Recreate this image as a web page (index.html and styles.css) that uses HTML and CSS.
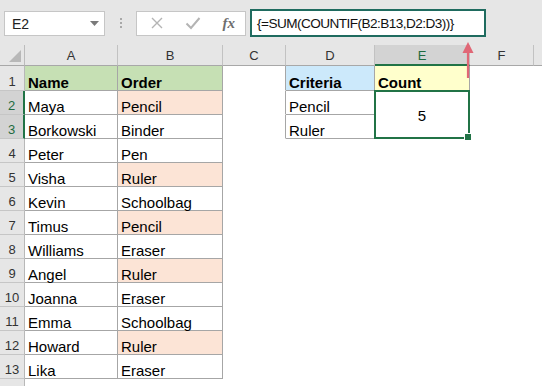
FILE: index.html
```html
<!DOCTYPE html>
<html>
<head>
<meta charset="utf-8">
<link rel="stylesheet" href="styles.css">
</head>
<body>
<div class="app">
  <div class="toolbar">
    <div class="namebox"><span>E2</span><svg class="dd" width="9" height="5" viewBox="0 0 9 5"><path d="M0 0h9L4.5 5z" fill="#7a7a7a"/></svg></div>
    <div class="grip"><i></i><i></i><i></i></div>
    <div class="fxbox">
      <svg width="14" height="14" viewBox="0 0 14 14"><path d="M2 2L12 12M12 2L2 12" stroke="#b4b4b4" stroke-width="1.4" fill="none"/></svg>
      <svg width="16" height="14" viewBox="0 0 16 14"><path d="M1.5 7.5L6 12L14.5 2" stroke="#b4b4b4" stroke-width="2" fill="none"/></svg>
      <span class="fx">fx</span>
    </div>
    <div class="formula">{=SUM(COUNTIF(B2:B13,D2:D3))}</div>
  </div>
  <div class="sheet">
    <div class="corner"><svg width="12" height="12" viewBox="0 0 12 12"><path d="M12 0V12H0z" fill="#b8b8b8"/></svg></div>
    <div class="ch">A</div><div class="ch">B</div><div class="ch">C</div><div class="ch">D</div><div class="ch sel">E</div><div class="ch">F</div><div class="ch last"></div>

    <div class="rh">1</div><div class="c t g b">Name</div><div class="c t g b">Order</div><div class="c rb"></div><div class="c t bl b">Criteria</div><div class="c t y b">Count</div><div class="c"></div><div class="c"></div>
    <div class="rh sel">2</div><div class="c t">Maya</div><div class="c t p">Pencil</div><div class="c rb"></div><div class="c t">Pencil</div><div class="c t merged">5</div><div class="c"></div><div class="c"></div>
    <div class="rh sel">3</div><div class="c t">Borkowski</div><div class="c t">Binder</div><div class="c rb"></div><div class="c t">Ruler</div><div class="c"></div><div class="c"></div>
    <div class="rh">4</div><div class="c t">Peter</div><div class="c t">Pen</div><div class="c"></div><div class="c"></div><div class="c"></div><div class="c"></div><div class="c"></div>
    <div class="rh">5</div><div class="c t">Visha</div><div class="c t p">Ruler</div><div class="c"></div><div class="c"></div><div class="c"></div><div class="c"></div><div class="c"></div>
    <div class="rh">6</div><div class="c t">Kevin</div><div class="c t">Schoolbag</div><div class="c"></div><div class="c"></div><div class="c"></div><div class="c"></div><div class="c"></div>
    <div class="rh">7</div><div class="c t">Timus</div><div class="c t p">Pencil</div><div class="c"></div><div class="c"></div><div class="c"></div><div class="c"></div><div class="c"></div>
    <div class="rh">8</div><div class="c t">Williams</div><div class="c t">Eraser</div><div class="c"></div><div class="c"></div><div class="c"></div><div class="c"></div><div class="c"></div>
    <div class="rh">9</div><div class="c t">Angel</div><div class="c t p">Ruler</div><div class="c"></div><div class="c"></div><div class="c"></div><div class="c"></div><div class="c"></div>
    <div class="rh">10</div><div class="c t">Joanna</div><div class="c t">Eraser</div><div class="c"></div><div class="c"></div><div class="c"></div><div class="c"></div><div class="c"></div>
    <div class="rh">11</div><div class="c t">Emma</div><div class="c t">Schoolbag</div><div class="c"></div><div class="c"></div><div class="c"></div><div class="c"></div><div class="c"></div>
    <div class="rh">12</div><div class="c t">Howard</div><div class="c t p">Ruler</div><div class="c"></div><div class="c"></div><div class="c"></div><div class="c"></div><div class="c"></div>
    <div class="rh">13</div><div class="c t">Lika</div><div class="c t">Eraser</div><div class="c"></div><div class="c"></div><div class="c"></div><div class="c"></div><div class="c"></div>
    <div class="rh"></div>
  </div>
  <svg class="arrow" width="14" height="36" viewBox="0 0 14 36"><path d="M7 10V36" stroke="#e06776" stroke-width="2.2"/><path d="M1.5 11L7 0L12.5 11z" fill="#e06776"/></svg>
</div>
</body>
</html>
```
FILE: styles.css
```css
* { box-sizing: border-box; }
html, body { margin: 0; padding: 0; background: #fff; }
body { font-family: "Liberation Sans", Arial, sans-serif; }
.app { position: relative; width: 542px; height: 386px; overflow: hidden; }
.toolbar {
  height: 45px; background: #e6e6e6; display: flex; align-items: center;
  padding: 1px 0 0 4px; gap: 0;
}
.namebox {
  width: 101px; height: 25px; background: #fff; border: 1px solid #c6c6c6;
  display: flex; align-items: center; justify-content: space-between;
  padding: 1px 5px 0 7px; font-size: 14px; color: #222;
}
.grip { width: 31px; display: flex; flex-direction: column; align-items: center; gap: 2px; }
.grip i { display: block; width: 2px; height: 2px; background: #a8a8a8; }
.fxbox {
  width: 110px; height: 25px; background: #fff; border: 1px solid #c6c6c6;
  display: flex; align-items: center; padding: 0 10px 0 13px; justify-content: space-between;
}
.fx { font-family: "Liberation Serif", serif; font-style: italic; font-weight: bold; font-size: 15px; color: #6e6e6e; }
.formula {
  margin-left: 4px; margin-top: -1px; width: 236px; height: 28px; background: #fff; border: 2px solid #1f6b5f;
  display: flex; align-items: center; padding: 1px 0 0 5px; font-size: 13.6px; letter-spacing: -0.55px; color: #111; white-space: nowrap;
}
.sheet {
  display: grid;
  grid-template-columns: 25px 93px 105px 63px 89px 95px 64px 8px;
  grid-template-rows: 21px 25px repeat(12, 24px) 20px;
}
.corner { background: #e6e6e6; border-right: 1px solid #bcbcbc; border-bottom: 1px solid #a8a8a8; display: flex; align-items: flex-end; justify-content: flex-end; padding: 0 3px 3px 0; }
.ch {
  background: #e6e6e6; border-right: 1px solid #c2c2c2; border-bottom: 1px solid #a8a8a8;
  font-size: 13px; color: #333; display: flex; align-items: center; justify-content: center; padding-top: 1px;
}
.ch.last { border-right: none; }
.ch.sel { background: #d3d3d3; border-bottom: 2px solid #217346; color: #1e6b40; }
.rh {
  background: #e6e6e6; border-right: 1px solid #b8b8b8; border-bottom: 1px solid #c6c6c6;
  font-size: 13px; line-height: 13px; color: #333; display: flex; align-items: flex-end; justify-content: center; padding-bottom: 2px;
}
.rh.sel { background: #d3d3d3; border-right: 2px solid #217346; color: #1e6b40; }
.c {
  font-size: 15px; line-height: 15px; color: #000; display: flex; align-items: flex-end; padding: 0 0 0 3px;
  border-right: 1px solid transparent; border-bottom: 1px solid transparent; white-space: nowrap;
}
.c.t { border-right-color: #a6a6a6; border-bottom-color: #a6a6a6; }
.c.rb { border-right-color: #a6a6a6; }
.g { background: #c6e0b4; }
.p { background: #fce4d6; }
.bl { background: #cce9fb; }
.y { background: #ffffcc; }
.b { font-weight: bold; }
.merged {
  grid-row: span 2; justify-content: center; align-items: center; padding: 2px 0 0;
  border: 2px solid #217346 !important; margin: -1px 0 0 -1px; position: relative;
}
.merged::after { content: ""; position: absolute; right: -4px; bottom: -4px; width: 6px; height: 6px; background: #217346; border: 1px solid #fff; }
.arrow { position: absolute; left: 461px; top: 42px; }
```
